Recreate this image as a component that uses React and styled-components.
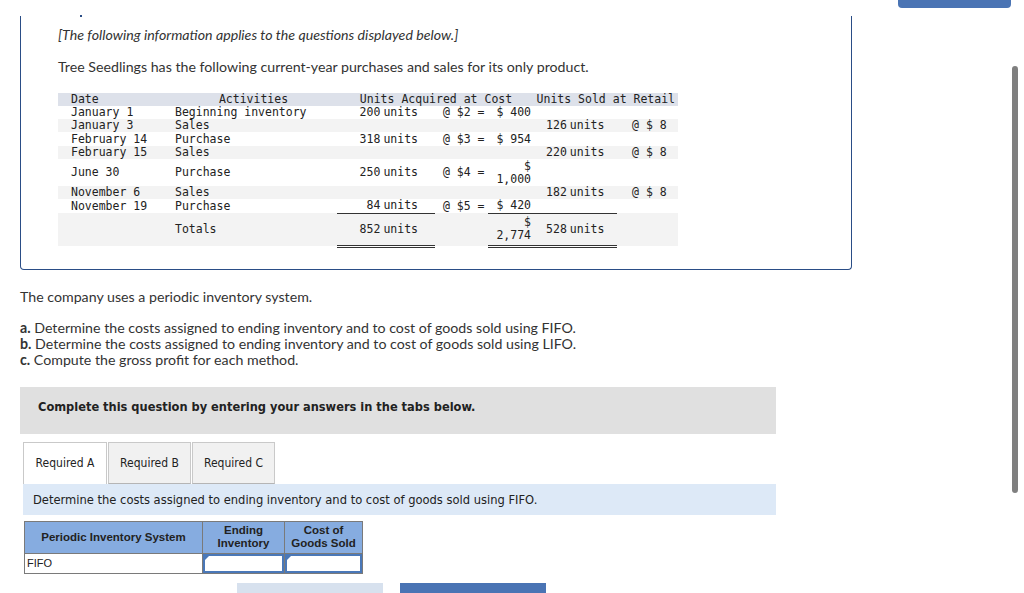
import React from "react";
import styled, { createGlobalStyle } from "styled-components";

const Global = createGlobalStyle`
  html, body { margin: 0; padding: 0; background: #fff; }
  body { overflow: hidden; }
`;

const Page = styled.div`
  position: relative;
  width: 1024px;
  height: 593px;
  overflow: hidden;
  font-family: Lato, "Open Sans", sans-serif;
  color: #333;
`;

const TopBar = styled.div`
  display: flex;
  justify-content: flex-end;
  height: 8px;
  padding-right: 13px;
`;

const TopButton = styled.div`
  width: 113px;
  height: 8px;
  background: #4a74b4;
  border-radius: 0 0 4px 4px;
`;

const Scrollbar = styled.div`
  position: absolute;
  left: 1012px;
  top: 66px;
  width: 6px;
  height: 427px;
  background: #7f7f7f;
  border-radius: 3px;
`;

const Content = styled.div`
  padding-left: 20px;
  width: 832px;
`;

const InfoBox = styled.div`
  margin-top: 8px;
  border: 1px solid #2a4d86;
  border-top: none;
  border-radius: 0 0 4px 4px;
  padding: 10px 0 21px 37px;
`;

const Dot = styled.div`
  position: absolute;
  left: 80px;
  top: 15px;
  width: 2px;
  height: 2px;
  background: #2a4d86;
`;

const Intro = styled.p`
  margin: 0;
  font-size: 14.2px;
  line-height: 18px;
  font-style: ${(p) => (p.$italic ? "italic" : "normal")};
  margin-bottom: ${(p) => p.$mb || 0}px;
`;

const DataTable = styled.table`
  border-collapse: collapse;
  font-family: "DejaVu Sans Mono", monospace;
  font-size: 11.5px;
  color: #222;
  width: 620px;
  table-layout: fixed;
`;

const Row = styled.tr`
  background: ${(p) => (p.$head ? "#dde1ea" : p.$shade ? "#f3f3f3" : "#fff")};
  height: ${(p) => p.$h}px;
`;

const Cell = styled.td`
  padding: 0;
  padding-left: ${(p) => p.$pl || 0}px;
  padding-right: ${(p) => p.$pr || 0}px;
  text-align: ${(p) => p.$align || "left"};
  line-height: 13px;
  white-space: pre;
  vertical-align: middle;
  border-bottom: ${(p) =>
    p.$under === "single" ? "1px solid #333" : p.$under === "double" ? "3px double #333" : "none"};
`;

const Units = styled.span`
  margin-left: 3px;
`;

const Question = styled.div`
  margin-top: 19px;
  font-size: 14.2px;
  line-height: 16px;
`;

const QLine = styled.div``;

const QGap = styled.div`
  height: 15px;
`;

const Bold = styled.b`
  font-weight: 700;
`;

const Notice = styled.div`
  margin-top: 19px;
  width: 756px;
  height: 47px;
  background: #e0e0e0;
  display: flex;
  align-items: center;
  padding: 0 0 7px 18px;
  box-sizing: border-box;
  font-family: "DejaVu Sans Condensed", "DejaVu Sans", sans-serif;
  font-stretch: condensed;
  font-weight: 700;
  font-size: 12.7px;
  color: #222;
`;

const Tabs = styled.div`
  margin-top: 8px;
  margin-left: 3px;
  display: flex;
  gap: 1px;
  height: 42px;
`;

const Tab = styled.div`
  width: ${(p) => (p.$active ? 84 : 83)}px;
  box-sizing: border-box;
  display: flex;
  align-items: center;
  justify-content: center;
  border: 1px solid #c9c9c9;
  border-bottom: ${(p) => (p.$active ? "none" : "1px solid #b5b5b5")};
  background: ${(p) => (p.$active ? "#fff" : "#f1f1f1")};
  font-family: "DejaVu Sans Condensed", "DejaVu Sans", sans-serif;
  font-stretch: condensed;
  font-size: 12px;
  color: #222;
`;

const Instruction = styled.div`
  margin-left: 3px;
  width: 753px;
  height: 31px;
  background: #dde9f7;
  display: flex;
  align-items: center;
  padding-left: 10px;
  box-sizing: border-box;
  font-family: "DejaVu Sans Condensed", "DejaVu Sans", sans-serif;
  font-stretch: condensed;
  font-size: 12.8px;
  color: #222;
`;

const AnswerTable = styled.table`
  margin-top: 6px;
  margin-left: 4px;
  border-collapse: collapse;
  font-family: "Liberation Sans", Arial, sans-serif;
  font-size: 11px;
  color: #222;
`;

const HeadCell = styled.th`
  background: #86ace0;
  border: 1px solid #7a7a7a;
  font-weight: 700;
  font-size: 11.5px;
  line-height: 13px;
  height: 32px;
  padding: 0 4px;
  width: ${(p) => p.$w}px;
  box-sizing: border-box;
`;

const LabelCell = styled.td`
  border: 1px solid #7a7a7a;
  height: 19px;
  padding: 0 2px;
  font-size: 11px;
`;

const InputCell = styled.td`
  border: 1px solid #7a7a7a;
  padding: 0;
  height: 19px;
`;

const InputBox = styled.div`
  position: relative;
  height: 19px;
  border: 2px solid #4a78b8;
  box-sizing: border-box;
  background: #fff;
  &::before {
    content: "";
    position: absolute;
    left: 0;
    top: 0;
    border-left: 4px solid #4a78b8;
    border-bottom: 4px solid transparent;
  }
`;

const ButtonRow = styled.div`
  margin-top: 9px;
  margin-left: 217px;
  display: flex;
  gap: 17px;
`;

const NavButton = styled.div`
  width: 146px;
  height: 20px;
  background: ${(p) => (p.$primary ? "#4a74b4" : "#d7e1ee")};
`;

const rows = [
  { d: "January 1", a: "Beginning inventory", u: "200", at: "@ $2 =", amt: ["$ 400"], h: 13 },
  { d: "January 3", a: "Sales", su: "126", sr: "@ $ 8", h: 13, shade: true },
  { d: "February 14", a: "Purchase", u: "318", at: "@ $3 =", amt: ["$ 954"], h: 14 },
  { d: "February 15", a: "Sales", su: "220", sr: "@ $ 8", h: 13, shade: true },
  { d: "June 30", a: "Purchase", u: "250", at: "@ $4 =", amt: ["$", "1,000"], h: 27 },
  { d: "November 6", a: "Sales", su: "182", sr: "@ $ 8", h: 13, shade: true },
  { d: "November 19", a: "Purchase", u: "84", at: "@ $5 =", amt: ["$ 420"], h: 14, under: true },
];

const UnitText = ({ n }) =>
  n ? (
    <>
      {n}
      <Units>units</Units>
    </>
  ) : null;

const Amount = ({ lines }) =>
  lines
    ? lines.map((l, i) => (
        <React.Fragment key={i}>
          {i > 0 && <br />}
          {l}
        </React.Fragment>
      ))
    : null;

export default function App() {
  return (
    <Page>
      <Global />
      <TopBar>
        <TopButton />
      </TopBar>
      <Dot />
      <Scrollbar />
      <Content>
        <InfoBox>
          <Intro $italic $mb={14}>
            [The following information applies to the questions displayed below.]
          </Intro>
          <Intro $mb={17}>
            Tree Seedlings has the following current-year purchases and sales for its only product.
          </Intro>
          <DataTable>
            <colgroup>
              <col style={{ width: 112 }} />
              <col style={{ width: 167 }} />
              <col style={{ width: 98 }} />
              <col style={{ width: 53 }} />
              <col style={{ width: 47 }} />
              <col style={{ width: 82 }} />
              <col style={{ width: 61 }} />
            </colgroup>
            <tbody>
              <Row $head $h={13}>
                <Cell $pl={13}>Date</Cell>
                <Cell $align="center">Activities</Cell>
                <Cell colSpan={3} $align="center">Units Acquired at Cost</Cell>
                <Cell colSpan={2} $align="right" $pr={3}>Units Sold at Retail</Cell>
              </Row>
              {rows.map((r) => (
                <Row key={r.d} $h={r.h} $shade={r.shade}>
                  <Cell $pl={13}>{r.d}</Cell>
                  <Cell $pl={5}>{r.a}</Cell>
                  <Cell $align="right" $pr={17} $under={r.under ? "single" : undefined}>
                    <UnitText n={r.u} />
                  </Cell>
                  <Cell $pl={8}>{r.at}</Cell>
                  <Cell $align="right" $pr={4} $under={r.under ? "single" : undefined}>
                    <Amount lines={r.amt} />
                  </Cell>
                  <Cell $pl={11} $under={r.under ? "single" : undefined}>
                    <UnitText n={r.su} />
                  </Cell>
                  <Cell $pl={15}>{r.sr}</Cell>
                </Row>
              ))}
              <Row $shade $h={33}>
                <Cell />
                <Cell $pl={5}>Totals</Cell>
                <Cell $align="right" $pr={17} $under="double">
                  <UnitText n="852" />
                </Cell>
                <Cell />
                <Cell $align="right" $pr={4} $under="double">
                  <Amount lines={["$", "2,774"]} />
                </Cell>
                <Cell $pl={11} $under="double">
                  <UnitText n="528" />
                </Cell>
                <Cell />
              </Row>
            </tbody>
          </DataTable>
        </InfoBox>

        <Question>
          <QLine>The company uses a periodic inventory system.</QLine>
          <QGap />
          <QLine>
            <Bold>a.</Bold> Determine the costs assigned to ending inventory and to cost of goods sold using FIFO.
          </QLine>
          <QLine>
            <Bold>b.</Bold> Determine the costs assigned to ending inventory and to cost of goods sold using LIFO.
          </QLine>
          <QLine>
            <Bold>c.</Bold> Compute the gross profit for each method.
          </QLine>
        </Question>

        <Notice>Complete this question by entering your answers in the tabs below.</Notice>

        <Tabs>
          <Tab $active>Required A</Tab>
          <Tab>Required B</Tab>
          <Tab>Required C</Tab>
        </Tabs>
        <Instruction>
          Determine the costs assigned to ending inventory and to cost of goods sold using FIFO.
        </Instruction>

        <AnswerTable>
          <thead>
            <tr>
              <HeadCell $w={178}>Periodic Inventory System</HeadCell>
              <HeadCell $w={82}>
                Ending
                <br />
                Inventory
              </HeadCell>
              <HeadCell $w={78}>
                Cost of
                <br />
                Goods Sold
              </HeadCell>
            </tr>
          </thead>
          <tbody>
            <tr>
              <LabelCell>FIFO</LabelCell>
              <InputCell>
                <InputBox />
              </InputCell>
              <InputCell>
                <InputBox />
              </InputCell>
            </tr>
          </tbody>
        </AnswerTable>

        <ButtonRow>
          <NavButton />
          <NavButton $primary />
        </ButtonRow>
      </Content>
    </Page>
  );
}
